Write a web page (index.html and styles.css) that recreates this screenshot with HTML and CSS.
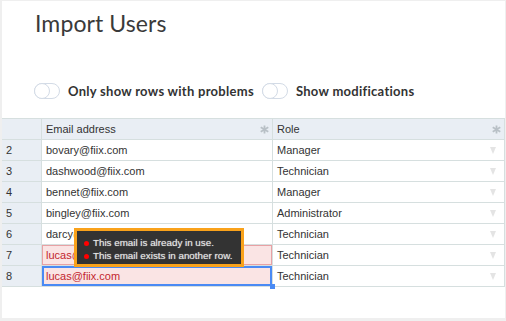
FILE: index.html
```html
<!DOCTYPE html>
<html>
<head>
<meta charset="utf-8">
<link rel="stylesheet" href="styles.css">
</head>
<body>
<div class="frame">
  <div class="panel">
    <h1 class="title">Import Users</h1>
    <div class="toggles">
      <label class="toggle"><span class="switch"><span class="knob"></span></span><span class="tlabel">Only show rows with problems</span></label>
      <label class="toggle"><span class="switch"><span class="knob"></span></span><span class="tlabel">Show modifications</span></label>
    </div>
    <div class="grid">
      <div class="row head">
        <div class="cell num"></div>
        <div class="cell email">Email address<svg class="req" viewBox="0 0 10 10"><path d="M5 0.5V9.5M0.8 2.6L9.2 7.4M0.8 7.4L9.2 2.6"/></svg></div>
        <div class="cell role">Role<svg class="req" viewBox="0 0 10 10"><path d="M5 0.5V9.5M0.8 2.6L9.2 7.4M0.8 7.4L9.2 2.6"/></svg></div>
      </div>
      <div class="row"><div class="cell num">2</div><div class="cell email">bovary@fiix.com</div><div class="cell role">Manager<span class="arrow"></span></div></div>
      <div class="row"><div class="cell num">3</div><div class="cell email">dashwood@fiix.com</div><div class="cell role">Technician<span class="arrow"></span></div></div>
      <div class="row"><div class="cell num">4</div><div class="cell email">bennet@fiix.com</div><div class="cell role">Manager<span class="arrow"></span></div></div>
      <div class="row"><div class="cell num">5</div><div class="cell email">bingley@fiix.com</div><div class="cell role">Administrator<span class="arrow"></span></div></div>
      <div class="row"><div class="cell num">6</div><div class="cell email">darcy@fiix.com</div><div class="cell role">Technician<span class="arrow"></span></div></div>
      <div class="row"><div class="cell num">7</div><div class="cell email error">lucas@fiix.com</div><div class="cell role">Technician<span class="arrow"></span></div></div>
      <div class="row"><div class="cell num">8</div><div class="cell email error selected">lucas@fiix.com<span class="handle"></span></div><div class="cell role">Technician<span class="arrow"></span></div></div>
      <div class="tooltip">
        <div class="tip-line"><span class="dot"></span>This email is already in use.</div>
        <div class="tip-line"><span class="dot"></span>This email exists in another row.</div>
      </div>
    </div>
  </div>
</div>
</body>
</html>
```
FILE: styles.css
```css
html, body {
  margin: 0;
  padding: 0;
  width: 506px;
  height: 321px;
  overflow: hidden;
}
.frame {
  width: 506px;
  height: 321px;
  box-sizing: border-box;
  padding: 1px 1px 3px 2px;
  background: #efefef;
}
.panel {
  background: #fff;
  height: 100%;
  display: flex;
  flex-direction: column;
}
.title {
  margin: 0;
  padding: 7px 0 0 33px;
  height: 30px;
  font-family: "Lato", sans-serif;
  font-weight: 400;
  font-size: 23px;
  line-height: 30px;
  color: #3a3a3a;
  letter-spacing: 0.1px;
}
.toggles {
  display: flex;
  align-items: center;
  gap: 8px;
  margin-top: 44px;
  padding-left: 32px;
  height: 17px;
}
.toggle {
  display: flex;
  align-items: center;
  gap: 8px;
}
.switch {
  width: 26px;
  height: 16px;
  box-sizing: border-box;
  border: 1px solid #d3dbe6;
  border-radius: 8px;
  background: #fff;
  position: relative;
  display: block;
}
.knob {
  position: absolute;
  left: -1px;
  top: -1px;
  width: 16px;
  height: 16px;
  box-sizing: border-box;
  border: 1px solid #d3dbe6;
  border-radius: 50%;
  background: #fff;
}
.tlabel {
  font-family: "Lato", sans-serif;
  font-weight: 700;
  font-size: 13px;
  color: #333;
  letter-spacing: 0.28px;
}
.grid {
  margin-top: 19px;
  position: relative;
  font-family: "Liberation Sans", Arial, sans-serif;
  font-size: 11px;
  color: #333;
}
.row {
  display: grid;
  grid-template-columns: 40px 231px 232px;
  height: 21px;
  border-bottom: 1px solid #d6dfdf;
  box-sizing: border-box;
}
.row.head {
  height: 22px;
  border-top: 1px solid #d6dfdf;
  background: #e9eef4;
}
.cell {
  display: flex;
  align-items: center;
  box-sizing: border-box;
  position: relative;
  border-right: 1px solid #d6dfdf;
  padding-left: 4px;
  white-space: nowrap;
}
.cell.num {
  background: #e9eef4;
  padding-left: 4px;
}
.cell.role {
  padding-left: 4px;
}
.row.head .cell {
  color: #333;
}
.req {
  position: absolute;
  right: 3px;
  top: 6px;
  width: 9px;
  height: 9px;
}
.req path {
  stroke: #b8c0c6;
  stroke-width: 2;
  fill: none;
}
.arrow {
  position: absolute;
  right: 8px;
  top: 7px;
  width: 0;
  height: 0;
  border-left: 3.5px solid transparent;
  border-right: 3.5px solid transparent;
  border-top: 7px solid #e4e4e4;
}
.cell.error {
  background: #fae4e4;
  color: #c3262e;
  box-shadow: inset 0 0 0 1px #e8a1a4;
}
.cell.selected {
  box-shadow: inset 0 0 0 2px #4a8af4;
  padding-left: 4px;
}
.handle {
  position: absolute;
  right: -3px;
  bottom: -3px;
  width: 5px;
  height: 5px;
  background: #4a8af4;
  z-index: 2;
}
.tooltip {
  position: absolute;
  left: 72px;
  top: 110px;
  width: 170px;
  height: 39px;
  box-sizing: border-box;
  border: 3px solid #f9a21b;
  background: #333;
  padding: 6px 0 0 7px;
  display: flex;
  flex-direction: column;
  gap: 1px;
  z-index: 3;
}
.tip-line {
  display: flex;
  align-items: center;
  font-family: "Liberation Sans", Arial, sans-serif;
  font-size: 9.8px;
  line-height: 12px;
  color: #e6e6e6;
  text-shadow: 0 0 1px #aaa;
}
.dot {
  width: 5px;
  height: 5px;
  border-radius: 50%;
  background: #f00;
  margin-right: 4px;
  flex: none;
}
```
